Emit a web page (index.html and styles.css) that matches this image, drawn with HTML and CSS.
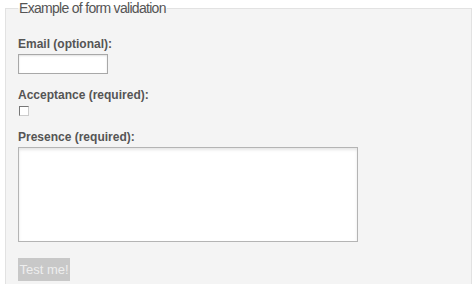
FILE: index.html
```html
<!DOCTYPE html>
<html lang="en">
	<head>
		<meta charset="UTF-8" />
		<title>Form validation</title>
		<link rel="stylesheet" href="styles.css">
	</head>
	<body>
		<form class="demo">
			<fieldset class="demo__set">
				<legend class="demo__legend">Example of form validation</legend>

				<div class="field">
					<label class="field__label" for="email">Email (optional):</label>
					<input class="field__input" id="email" type="text" />
				</div>

				<div class="field">
					<label class="field__label" for="accept">Acceptance (required):</label>
					<input class="field__check" id="accept" type="checkbox" />
				</div>

				<div class="field">
					<label class="field__label" for="presence">Presence (required):</label>
					<textarea class="field__area" id="presence"></textarea>
				</div>

				<button class="demo__submit" type="button">Test me!</button>
			</fieldset>
		</form>
	</body>
</html>
```

FILE: styles.css
```css
body {
	margin: 0;
	background: #fff;
	font-family: "Liberation Sans", Arial, sans-serif;
	color: #555;
}
.demo {
	padding: 0 2px 0 5px;
}
.demo__set {
	margin: 0;
	padding: 21px 12px 4px 12px;
	height: 290px;
	box-sizing: border-box;
	border: 1px solid #e2e2e2;
	background: #f4f4f4;
}
.demo__legend {
	padding: 0 1px;
	margin-left: 0;
	font-size: 14px;
	letter-spacing: -0.7px;
	color: #555;
}
.field {
	display: flex;
	flex-direction: column;
	align-items: flex-start;
	margin-bottom: 14px;
}
.field__label {
	font-size: 12px;
	font-weight: bold;
	line-height: 15px;
	margin-bottom: 2px;
}
.field__input {
	width: 90px;
	height: 20px;
	box-sizing: border-box;
	margin: 0;
	border: 1px solid #a8a8a8;
	background: #fff;
	box-shadow: inset 0 1px 2px rgba(0, 0, 0, 0.12);
}
.field__check {
	appearance: none;
	width: 10px;
	height: 10px;
	margin: 1px 0 0 1px;
	border: 1px solid #777;
	border-right-color: #ccc;
	border-bottom-color: #ccc;
	background: #fff;
}
.field__area {
	width: 340px;
	height: 95px;
	box-sizing: border-box;
	margin: 0;
	resize: none;
	border: 1px solid #b4b4b4;
	background: #fff;
	box-shadow: inset 0 2px 3px rgba(0, 0, 0, 0.1);
}
.demo__submit {
	margin-top: 2px;
	width: 52px;
	height: 23px;
	padding: 0;
	border: 0;
	background: #c8c8c8;
	color: #eee;
	font-family: "Liberation Sans", Arial, sans-serif;
	font-size: 13px;
}
```
